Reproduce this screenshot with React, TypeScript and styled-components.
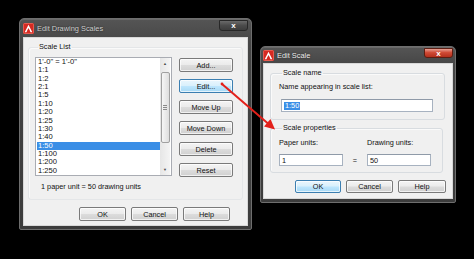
import React from 'react';
import styled, { createGlobalStyle, css } from 'styled-components';

const GlobalStyle = createGlobalStyle`
  html, body {
    margin: 0;
    padding: 0;
    background: #000;
  }
  body {
    font-family: "Liberation Sans", Arial, sans-serif;
    font-size: 7.3px;
    color: #111;
  }
`;

const Desktop = styled.div`
  position: relative;
  width: 474px;
  height: 259px;
  background: #000;
  overflow: hidden;
`;

const Window = styled.div<{ $x: number; $y: number; $w: number; $h: number; $pad: number }>`
  position: absolute;
  left: ${({ $x }) => $x}px;
  top: ${({ $y }) => $y}px;
  width: ${({ $w }) => $w}px;
  height: ${({ $h }) => $h}px;
  box-sizing: border-box;
  display: flex;
  flex-direction: column;
  padding: 0 ${({ $pad }) => $pad}px 3px;
  background: linear-gradient(180deg, #555 0%, #454545 12%, #3c3c3c 100%);
  border: 1px solid #6e6e6e;
  border-radius: 5px 5px 2px 2px;
  box-shadow: inset 0 1px 0 rgba(255, 255, 255, 0.12);
`;

const TitleBar = styled.div<{ $h: number; $active?: boolean }>`
  height: ${({ $h }) => $h}px;
  flex: none;
  display: flex;
  align-items: center;
  gap: 3px;
  font-size: 7.4px;
  color: ${({ $active }) => ($active ? '#ececec' : '#cfcfcf')};
`;

const TitleText = styled.span`
  white-space: nowrap;
  text-shadow: 0 0 2px rgba(0, 0, 0, 0.6);
`;

const CloseButton = styled.div<{ $active?: boolean; $h: number }>`
  margin-left: auto;
  align-self: flex-start;
  margin-top: 1px;
  width: 29px;
  height: ${({ $h }) => $h}px;
  box-sizing: border-box;
  border-radius: 0 0 3px 3px;
  display: flex;
  align-items: center;
  justify-content: center;
  color: #fff;
  font-weight: bold;
  font-size: 8px;
  ${({ $active }) =>
    $active
      ? css`
          background: linear-gradient(180deg, #e7a093 0%, #d04a35 45%, #b3301c 100%);
          border: 1px solid #5c1d12;
        `
      : css`
          background: linear-gradient(180deg, #6a6a6a 0%, #4b4b4b 50%, #3d3d3d 100%);
          border: 1px solid #282828;
        `}
`;

const Client = styled.div`
  flex: 1;
  box-sizing: border-box;
  display: flex;
  flex-direction: column;
  background: #f0f0f0;
  border: 1px solid #d8d8d8;
`;

const GroupBox = styled.fieldset<{ $m: string; $p: string; $faint?: boolean }>`
  margin: ${({ $m }) => $m};
  padding: ${({ $p }) => $p};
  min-width: 0;
  border: 1px solid ${({ $faint }) => ($faint ? '#e4e6e8' : '#d8dce0')};
  border-radius: 3px;
  box-shadow: inset 1px 1px 0 #fafafa;
`;

const Legend = styled.legend`
  padding: 0 1px;
  margin-left: 3px;
  line-height: 8px;
`;

const Label = styled.div`
  line-height: 8px;
  white-space: nowrap;
`;

const ListRow = styled.div`
  display: flex;
  gap: 7px;
  align-items: flex-start;
`;

const ListBox = styled.div`
  width: 137px;
  height: 119px;
  box-sizing: border-box;
  border: 1px solid #a9acb3;
  background: #fff;
  display: flex;
  padding: 0 1px;
`;

const Items = styled.div`
  flex: 1;
  display: flex;
  flex-direction: column;
`;

const Item = styled.div<{ $selected?: boolean }>`
  height: 8.36px;
  line-height: 8.36px;
  padding-left: 1px;
  font-size: 7.6px;
  white-space: nowrap;
  ${({ $selected }) =>
    $selected &&
    css`
      background: #3a8ee6;
      color: #fff;
    `}
`;

const ScrollBar = styled.div`
  width: 10px;
  display: flex;
  flex-direction: column;
  align-items: center;
  background: linear-gradient(90deg, #e6e6e6, #f4f4f4);
`;

const ScrollArrow = styled.div<{ $bottom?: boolean }>`
  height: 11px;
  display: flex;
  align-items: center;
  justify-content: center;
  color: #4a4a4a;
  font-size: 4px;
  margin-top: ${({ $bottom }) => ($bottom ? 'auto' : '0')};
`;

const ScrollThumb = styled.div`
  margin-top: 3px;
  width: 9px;
  height: 71px;
  box-sizing: border-box;
  border: 1px solid #a0a0a0;
  border-radius: 2px;
  background: linear-gradient(90deg, #f6f6f6, #dedede);
  display: flex;
  align-items: center;
  justify-content: center;
`;

const Grip = styled.div`
  width: 4px;
  height: 5px;
  background: repeating-linear-gradient(180deg, #8a8a8a 0 1px, transparent 1px 2px);
`;

const SideButtons = styled.div`
  display: flex;
  flex-direction: column;
  gap: 7px;
  padding-top: 1px;
`;

const Button = styled.div<{ $w: number; $h?: number; $focus?: boolean }>`
  width: ${({ $w }) => $w}px;
  height: ${({ $h }) => $h ?? 14}px;
  box-sizing: border-box;
  border: 1px solid #7a7a7a;
  border-radius: 2px;
  display: flex;
  align-items: center;
  justify-content: center;
  white-space: nowrap;
  background: linear-gradient(180deg, #f4f4f4 0%, #ebebeb 48%, #dcdcdc 52%, #d0d0d0 100%);
  box-shadow: inset 0 0 0 1px rgba(255, 255, 255, 0.7);
  ${({ $focus }) =>
    $focus &&
    css`
      border-color: #3c7fb1;
      background: linear-gradient(180deg, #eaf6fd 0%, #d9f0fc 48%, #bee6fd 52%, #a7d9f5 100%);
    `}
`;

const InfoText = styled(Label)`
  margin: 6px 0 0 6px;
`;

const ButtonRow = styled.div<{ $p: string }>`
  display: flex;
  justify-content: flex-end;
  gap: 5px;
  padding: ${({ $p }) => $p};
`;

const TextBox = styled.div<{ $w: number; $h: number; $indent?: boolean }>`
  width: ${({ $w }) => $w}px;
  height: ${({ $h }) => $h}px;
  box-sizing: border-box;
  border: 1px solid #a7b2c0;
  border-top-color: #8f9aa8;
  background: #fff;
  display: flex;
  align-items: center;
  padding-left: 2px;
  ${({ $indent }) =>
    $indent &&
    css`
      margin: 8px 0 0 2px;
    `}
`;

const Selection = styled.span`
  background: #3a8ee6;
  color: #fff;
  padding: 0 1px;
  line-height: 8px;
`;

const UnitsGrid = styled.div`
  display: grid;
  grid-template-columns: 64px 24px 64px;
  row-gap: 7px;
  align-items: center;
`;

const Equals = styled.div`
  text-align: center;
`;

const Overlay = styled.svg`
  position: absolute;
  left: 0;
  top: 0;
  pointer-events: none;
`;

const AppIcon: React.FC = () => (
  <svg width="11" height="11" viewBox="0 0 11 11" style={{ flex: 'none' }}>
    <rect x="0" y="0" width="11" height="11" rx="1.5" fill="#d52a22" />
    <rect x="0.5" y="0.5" width="10" height="10" rx="1.2" fill="none" stroke="#f07a6e" strokeWidth="0.6" />
    <path d="M5.5 1.8 L9.3 9.3 L7.6 9.3 L5.5 5 L3.4 9.3 L1.7 9.3 Z" fill="#fff" />
    <path d="M4.4 7.3 L6.6 7.3" stroke="#d52a22" strokeWidth="0.8" />
  </svg>
);

const scales = [
  `1'-0" = 1'-0"`,
  '1:1',
  '1:2',
  '2:1',
  '1:5',
  '1:10',
  '1:20',
  '1:25',
  '1:30',
  '1:40',
  '1:50',
  '1:100',
  '1:200',
  '1:250',
];

export default function App() {
  return (
    <Desktop>
      <GlobalStyle />

      <Window $x={19} $y={18} $w={233} $h={212} $pad={3}>
        <TitleBar $h={18}>
          <AppIcon />
          <TitleText>Edit Drawing Scales</TitleText>
          <CloseButton $h={11}>x</CloseButton>
        </TitleBar>
        <Client>
          <GroupBox $faint $m="5px 4px 0 4px" $p="6px 8px 8px 6px">
            <Legend>Scale List</Legend>
            <ListRow>
              <ListBox>
                <Items>
                  {scales.map((s) => (
                    <Item key={s} $selected={s === '1:50'}>
                      {s}
                    </Item>
                  ))}
                </Items>
                <ScrollBar>
                  <ScrollArrow>▲</ScrollArrow>
                  <ScrollThumb>
                    <Grip />
                  </ScrollThumb>
                  <ScrollArrow $bottom>▼</ScrollArrow>
                </ScrollBar>
              </ListBox>
              <SideButtons>
                <Button $w={54}>Add...</Button>
                <Button $w={54} $focus>
                  Edit...
                </Button>
                <Button $w={54}>Move Up</Button>
                <Button $w={54}>Move Down</Button>
                <Button $w={54}>Delete</Button>
                <Button $w={54}>Reset</Button>
              </SideButtons>
            </ListRow>
            <InfoText>1 paper unit = 50 drawing units</InfoText>
          </GroupBox>
          <ButtonRow $p="7px 17px 0 0">
            <Button $w={47}>OK</Button>
            <Button $w={47}>Cancel</Button>
            <Button $w={47}>Help</Button>
          </ButtonRow>
        </Client>
      </Window>

      <Window $x={260} $y={46} $w={196} $h={157} $pad={2}>
        <TitleBar $h={16} $active>
          <AppIcon />
          <TitleText>Edit Scale</TitleText>
          <CloseButton $h={10} $active>
            x
          </CloseButton>
        </TitleBar>
        <Client>
          <GroupBox $m="5px 7px 0 6px" $p="6px 8px 7px 8px">
            <Legend>Scale name</Legend>
            <Label>Name appearing in scale list:</Label>
            <TextBox $w={152} $h={13} $indent>
              <Selection>1:50</Selection>
            </TextBox>
          </GroupBox>
          <GroupBox $m="4px 9px 0 6px" $p="7px 8px 6px 8px">
            <Legend>Scale properties</Legend>
            <UnitsGrid>
              <Label>Paper units:</Label>
              <span />
              <Label>Drawing units:</Label>
              <TextBox $w={64} $h={12}>1</TextBox>
              <Equals>=</Equals>
              <TextBox $w={64} $h={12}>50</TextBox>
            </UnitsGrid>
          </GroupBox>
          <ButtonRow $p="7px 6px 0 0">
            <Button $w={46} $h={13} $focus>
              OK
            </Button>
            <Button $w={47} $h={13}>
              Cancel
            </Button>
            <Button $w={48} $h={13}>
              Help
            </Button>
          </ButtonRow>
        </Client>
      </Window>

      <Overlay width="474" height="259" viewBox="0 0 474 259">
        <circle cx="222" cy="84" r="1.4" fill="#e3211b" />
        <line x1="222" y1="84" x2="268" y2="123.5" stroke="#e3211b" strokeWidth="2" strokeLinecap="round" />
        <polygon points="275,129.5 264,126.5 270.5,119" fill="#e3211b" />
      </Overlay>
    </Desktop>
  );
}
